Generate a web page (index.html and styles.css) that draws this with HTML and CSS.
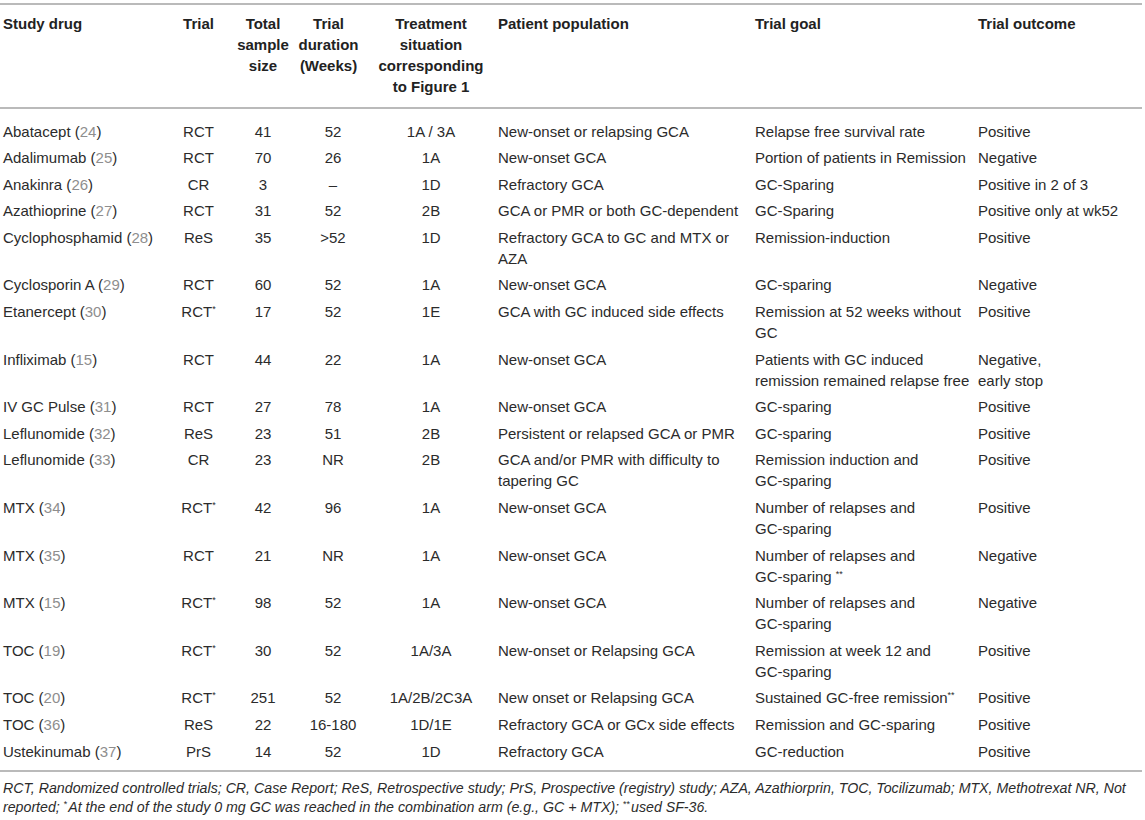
FILE: index.html
```html
<!DOCTYPE html>
<html lang="en">
<head>
<meta charset="utf-8">
<title>Study drugs in GCA</title>
<link rel="stylesheet" href="styles.css">
</head>
<body>
<div class="page">
<table class="tbl">
  <colgroup>
    <col class="w-drug"><col class="w-trial"><col class="w-size"><col class="w-dur"><col class="w-sit"><col class="w-pop"><col class="w-goal"><col class="w-out">
  </colgroup>
  <thead>
    <tr>
      <th>Study drug</th>
      <th class="c">Trial</th>
      <th class="c">Total sample size</th>
      <th class="c dur">Trial duration (Weeks)</th>
      <th class="c sit">Treatment situation corresponding to Figure 1</th>
      <th>Patient population</th>
      <th>Trial goal</th>
      <th>Trial outcome</th>
    </tr>
  </thead>
  <tbody>
    <tr><td>Abatacept (<span class="ref">24</span>)</td><td class="c">RCT</td><td class="c">41</td><td class="c dur">52</td><td class="c sit">1A / 3A</td><td>New-onset or relapsing GCA</td><td>Relapse free survival rate</td><td>Positive</td></tr>
    <tr><td>Adalimumab (<span class="ref">25</span>)</td><td class="c">RCT</td><td class="c">70</td><td class="c dur">26</td><td class="c sit">1A</td><td>New-onset GCA</td><td>Portion of patients in Remission</td><td>Negative</td></tr>
    <tr><td>Anakinra (<span class="ref">26</span>)</td><td class="c">CR</td><td class="c">3</td><td class="c dur">–</td><td class="c sit">1D</td><td>Refractory GCA</td><td>GC-Sparing</td><td>Positive in 2 of 3</td></tr>
    <tr><td>Azathioprine (<span class="ref">27</span>)</td><td class="c">RCT</td><td class="c">31</td><td class="c dur">52</td><td class="c sit">2B</td><td>GCA or PMR or both GC-dependent</td><td>GC-Sparing</td><td>Positive only at wk52</td></tr>
    <tr><td>Cyclophosphamid (<span class="ref">28</span>)</td><td class="c">ReS</td><td class="c">35</td><td class="c dur">&gt;52</td><td class="c sit">1D</td><td>Refractory GCA to GC and MTX or AZA</td><td>Remission-induction</td><td>Positive</td></tr>
    <tr><td>Cyclosporin A (<span class="ref">29</span>)</td><td class="c">RCT</td><td class="c">60</td><td class="c dur">52</td><td class="c sit">1A</td><td>New-onset GCA</td><td>GC-sparing</td><td>Negative</td></tr>
    <tr><td>Etanercept (<span class="ref">30</span>)</td><td class="c">RCT<sup class="ast">*</sup></td><td class="c">17</td><td class="c dur">52</td><td class="c sit">1E</td><td>GCA with GC induced side effects</td><td>Remission at 52 weeks without GC</td><td>Positive</td></tr>
    <tr><td>Infliximab (<span class="ref">15</span>)</td><td class="c">RCT</td><td class="c">44</td><td class="c dur">22</td><td class="c sit">1A</td><td>New-onset GCA</td><td>Patients with GC induced remission remained relapse free</td><td>Negative,<br>early stop</td></tr>
    <tr><td>IV GC Pulse (<span class="ref">31</span>)</td><td class="c">RCT</td><td class="c">27</td><td class="c dur">78</td><td class="c sit">1A</td><td>New-onset GCA</td><td>GC-sparing</td><td>Positive</td></tr>
    <tr><td>Leflunomide (<span class="ref">32</span>)</td><td class="c">ReS</td><td class="c">23</td><td class="c dur">51</td><td class="c sit">2B</td><td>Persistent or relapsed GCA or PMR</td><td>GC-sparing</td><td>Positive</td></tr>
    <tr><td>Leflunomide (<span class="ref">33</span>)</td><td class="c">CR</td><td class="c">23</td><td class="c dur">NR</td><td class="c sit">2B</td><td>GCA and/or PMR with difficulty to tapering GC</td><td>Remission induction and <span class="nw">GC-sparing</span></td><td>Positive</td></tr>
    <tr><td>MTX (<span class="ref">34</span>)</td><td class="c">RCT<sup class="ast">*</sup></td><td class="c">42</td><td class="c dur">96</td><td class="c sit">1A</td><td>New-onset GCA</td><td>Number of relapses and <span class="nw">GC-sparing</span></td><td>Positive</td></tr>
    <tr><td>MTX (<span class="ref">35</span>)</td><td class="c">RCT</td><td class="c">21</td><td class="c dur">NR</td><td class="c sit">1A</td><td>New-onset GCA</td><td>Number of relapses and <span class="nw">GC-sparing <sup class="ast">**</sup></span></td><td>Negative</td></tr>
    <tr><td>MTX (<span class="ref">15</span>)</td><td class="c">RCT<sup class="ast">*</sup></td><td class="c">98</td><td class="c dur">52</td><td class="c sit">1A</td><td>New-onset GCA</td><td>Number of relapses and <span class="nw">GC-sparing</span></td><td>Negative</td></tr>
    <tr><td>TOC (<span class="ref">19</span>)</td><td class="c">RCT<sup class="ast">*</sup></td><td class="c">30</td><td class="c dur">52</td><td class="c sit">1A/3A</td><td>New-onset or Relapsing GCA</td><td>Remission at week 12 and <span class="nw">GC-sparing</span></td><td>Positive</td></tr>
    <tr><td>TOC (<span class="ref">20</span>)</td><td class="c">RCT<sup class="ast">*</sup></td><td class="c">251</td><td class="c dur">52</td><td class="c sit">1A/2B/2C3A</td><td>New onset or Relapsing GCA</td><td>Sustained GC-free remission<sup class="ast">**</sup></td><td>Positive</td></tr>
    <tr><td>TOC (<span class="ref">36</span>)</td><td class="c">ReS</td><td class="c">22</td><td class="c dur">16-180</td><td class="c sit">1D/1E</td><td>Refractory GCA or GCx side effects</td><td>Remission and GC-sparing</td><td>Positive</td></tr>
    <tr><td>Ustekinumab (<span class="ref">37</span>)</td><td class="c">PrS</td><td class="c">14</td><td class="c dur">52</td><td class="c sit">1D</td><td>Refractory GCA</td><td>GC-reduction</td><td>Positive</td></tr>
  </tbody>
</table>
<p class="note">RCT, Randomized controlled trials; CR, Case Report; ReS, Retrospective study; PrS, Prospective (registry) study; AZA, Azathiorprin, TOC, Tocilizumab; MTX, Methotrexat NR, Not reported; <sup class="ast note-ast">*</sup>At the end of the study 0 mg GC was reached in the combination arm (e.g., GC + MTX); <sup class="ast note-ast">**</sup>used SF-36.</p>
</div>
</body>
</html>
```

FILE: styles.css
```css
body {
  margin: 0;
  background: #ffffff;
  font-family: "Liberation Sans", Arial, Helvetica, sans-serif;
  color: #2b2b2b;
}

.page {
  padding-top: 3px;
}

.tbl {
  border-spacing: 0;
  table-layout: fixed;
  width: 1142px;
  font-size: 15px;
  line-height: 21px;
}

.w-drug { width: 168px; }
.w-trial { width: 61px; }
.w-size { width: 68px; }
.w-dur { width: 66px; }
.w-sit { width: 132px; }
.w-pop { width: 257px; }
.w-goal { width: 223px; }
.w-out { width: 167px; }

.tbl th {
  font-weight: bold;
  text-align: left;
  vertical-align: top;
  color: #222222;
  padding: 7.5px 3px 10.5px;
  border-top: 2px solid #bababa;
  border-bottom: 2px solid #bababa;
}

.tbl td {
  vertical-align: top;
  padding: 2.8px 3px;
}

.tbl tbody tr:first-child td {
  padding-top: 11.5px;
}

.tbl tbody tr:last-child td {
  padding-bottom: 8px;
  border-bottom: 2px solid #bababa;
}

.tbl th.c,
.tbl td.c {
  text-align: center;
}

.tbl th.dur {
  padding-left: 0;
  padding-right: 3px;
}

.tbl td.dur {
  padding-left: 8px;
  padding-right: 2px;
}

.tbl th.sit,
.tbl td.sit {
  padding-left: 8px;
  padding-right: 4px;
}

.nw {
  white-space: nowrap;
}

.ref {
  color: #8e8e8e;
}

.ast {
  font-size: 9px;
  line-height: 0;
  vertical-align: 5px;
}

.note {
  margin: 0;
  padding: 7.8px 3px 0;
  font-style: italic;
  font-size: 14.2px;
  line-height: 19px;
  color: #2b2b2b;
}

.note-ast {
  font-style: normal;
  margin-right: 1px;
}
```
